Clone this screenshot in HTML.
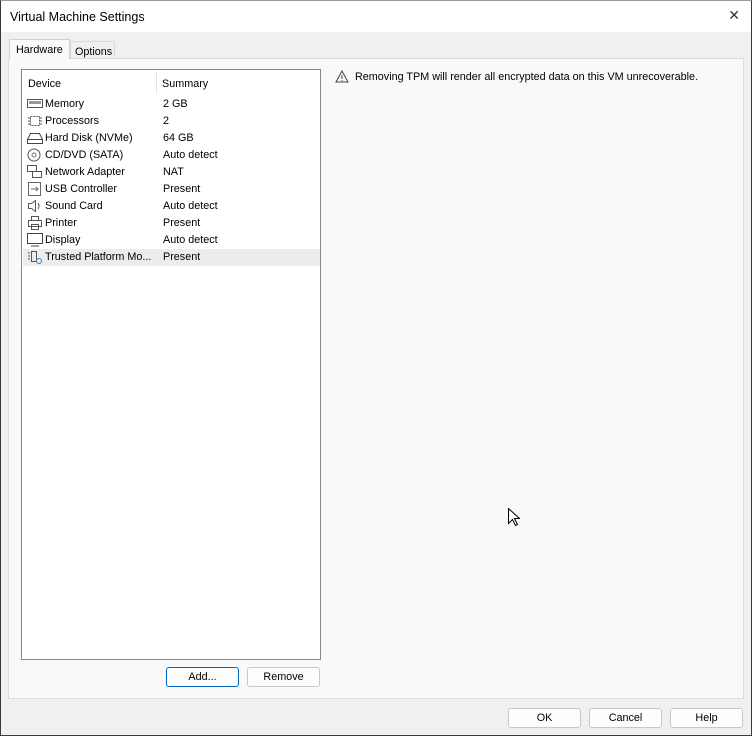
<!DOCTYPE html>
<html><head><meta charset="utf-8"><style>
*{box-sizing:border-box;margin:0;padding:0}
body{width:752px;height:736px;overflow:hidden;background:#f0f0f0;font-family:"Liberation Sans",sans-serif;font-size:10.8px;color:#000;position:relative}
.win{position:absolute;left:0;top:0;width:752px;height:736px;background:#f0f0f0}
.frame{position:absolute;left:0;top:0;width:752px;height:736px;border:1px solid #3a3a3a;border-top-color:#9a9a9a;pointer-events:none;z-index:9}
.title{position:absolute;left:0;top:0;width:752px;height:32px;background:#fff;font-size:12.5px;padding:10px 0 0 10px}
.close{position:absolute;right:12px;top:7px;font-size:14px;color:#333}
.tab{position:absolute;background:#f9f9f9;border:1px solid #d9d9d9;border-bottom:none}
.panel{position:absolute;left:8px;top:58px;width:736px;height:641px;background:#f9f9f9;border:1px solid #dcdcdc}
.list{position:absolute;left:21px;top:69px;width:300px;height:591px;background:#fff;border:1px solid #888}
.hdr{position:absolute;top:8px}
.sep{position:absolute;left:134px;top:2px;width:1px;height:22px;background:#e3e3e3}
.row{position:absolute;left:1px;width:297px;height:17px;line-height:17px}
.row .n{position:absolute;left:22px}
.row .s{position:absolute;left:140px}
.row svg{position:absolute;left:4px;top:1px}
.sel{background:#ececec}
.btn{position:absolute;height:20px;border:1px solid #c8c8c8;border-radius:3px;background:#fdfdfd;text-align:center;line-height:18px}
</style></head><body>
<div class="win">
<div class="title">Virtual Machine Settings<span class="close">✕</span></div>
<div class="panel"></div>
<div class="tab" style="left:9px;top:39px;width:61px;height:20px;padding:4px 0 0 6px;z-index:2;border-color:#d0d0d0">Hardware</div>
<div class="tab" style="left:70px;top:41px;width:45px;height:17px;padding:4px 0 0 4px;background:#f0f0f0">Options</div>
<div class="list">
<div class="hdr" style="left:6px">Device</div><div class="sep"></div><div class="hdr" style="left:140px">Summary</div>
<div class="row" style="top:26px"><svg width="16" height="14"><rect x="0.5" y="2.5" width="15" height="8" fill="none" stroke="#555"/><rect x="2" y="4" width="12" height="3" fill="#999"/></svg><span class="n">Memory</span><span class="s">2 GB</span></div>
<div class="row" style="top:43px"><svg width="16" height="14"><rect x="3.5" y="2.5" width="9" height="9" fill="none" stroke="#555" stroke-dasharray="2 1"/><path d="M1 4h2M1 7h2M1 10h2M13 4h2M13 7h2M13 10h2" stroke="#555"/></svg><span class="n">Processors</span><span class="s">2</span></div>
<div class="row" style="top:60px"><svg width="16" height="14"><path d="M0.5 12.5h15v-4l-3-6h-9l-3 6z M0.5 8.5h15" fill="none" stroke="#444"/></svg><span class="n">Hard Disk (NVMe)</span><span class="s">64 GB</span></div>
<div class="row" style="top:77px"><svg width="16" height="14"><circle cx="7" cy="7" r="6" fill="none" stroke="#555"/><circle cx="7" cy="7" r="2" fill="none" stroke="#777"/></svg><span class="n">CD/DVD (SATA)</span><span class="s">Auto detect</span></div>
<div class="row" style="top:94px"><svg width="16" height="14"><rect x="0.5" y="0.5" width="9" height="6" fill="none" stroke="#555"/><rect x="5.5" y="6.5" width="9" height="6" fill="none" stroke="#555"/></svg><span class="n">Network Adapter</span><span class="s">NAT</span></div>
<div class="row" style="top:111px"><svg width="16" height="14"><rect x="1.5" y="0.5" width="12" height="13" fill="none" stroke="#666"/><path d="M4 7h7M9 5l2 2-2 2" stroke="#666" fill="none"/></svg><span class="n">USB Controller</span><span class="s">Present</span></div>
<div class="row" style="top:128px"><svg width="16" height="14"><path d="M1.5 4.5h3l4-3v11l-4-3h-3z M11 4q2 3 0 6" fill="none" stroke="#555"/></svg><span class="n">Sound Card</span><span class="s">Auto detect</span></div>
<div class="row" style="top:145px"><svg width="16" height="14"><path d="M4.5 4.5v-4h7v4 M1.5 4.5h13v6h-13z M4.5 8.5h7v5h-7z" fill="none" stroke="#555"/></svg><span class="n">Printer</span><span class="s">Present</span></div>
<div class="row" style="top:162px"><svg width="16" height="14"><rect x="0.5" y="0.5" width="15" height="10" fill="none" stroke="#444"/><path d="M4 13h8" stroke="#444"/></svg><span class="n">Display</span><span class="s">Auto detect</span></div>
<div class="row sel" style="top:179px"><svg width="16" height="14"><path d="M4.5 1.5h5v10h-5z M1 3h2M1 6h2M1 9h2" fill="none" stroke="#555"/><circle cx="12" cy="11" r="2.5" fill="none" stroke="#4a7fb5"/></svg><span class="n">Trusted Platform Mo...</span><span class="s">Present</span></div>
</div>
<svg style="position:absolute;left:335px;top:70px" width="14" height="13"><path d="M7 1L13 12H1z" fill="none" stroke="#444"/><path d="M7 5v4M7 10v1" stroke="#444"/></svg>
<div style="position:absolute;left:355px;top:71px">Removing TPM will render all encrypted data on this VM unrecoverable.</div>
<div class="btn" style="left:166px;top:667px;width:73px;border-color:#0067c0">Add...</div>
<div class="btn" style="left:247px;top:667px;width:73px">Remove</div>
<div class="btn" style="left:508px;top:708px;width:73px">OK</div>
<div class="btn" style="left:589px;top:708px;width:73px">Cancel</div>
<div class="btn" style="left:670px;top:708px;width:73px">Help</div>
<svg style="position:absolute;left:508px;top:508px" width="12" height="19"><path d="M0.5 0.5v15l4-4 3 6 2-1-3-6h5z" fill="#fff" stroke="#000"/></svg>
</div>
<div class="frame"></div>
</body></html>
